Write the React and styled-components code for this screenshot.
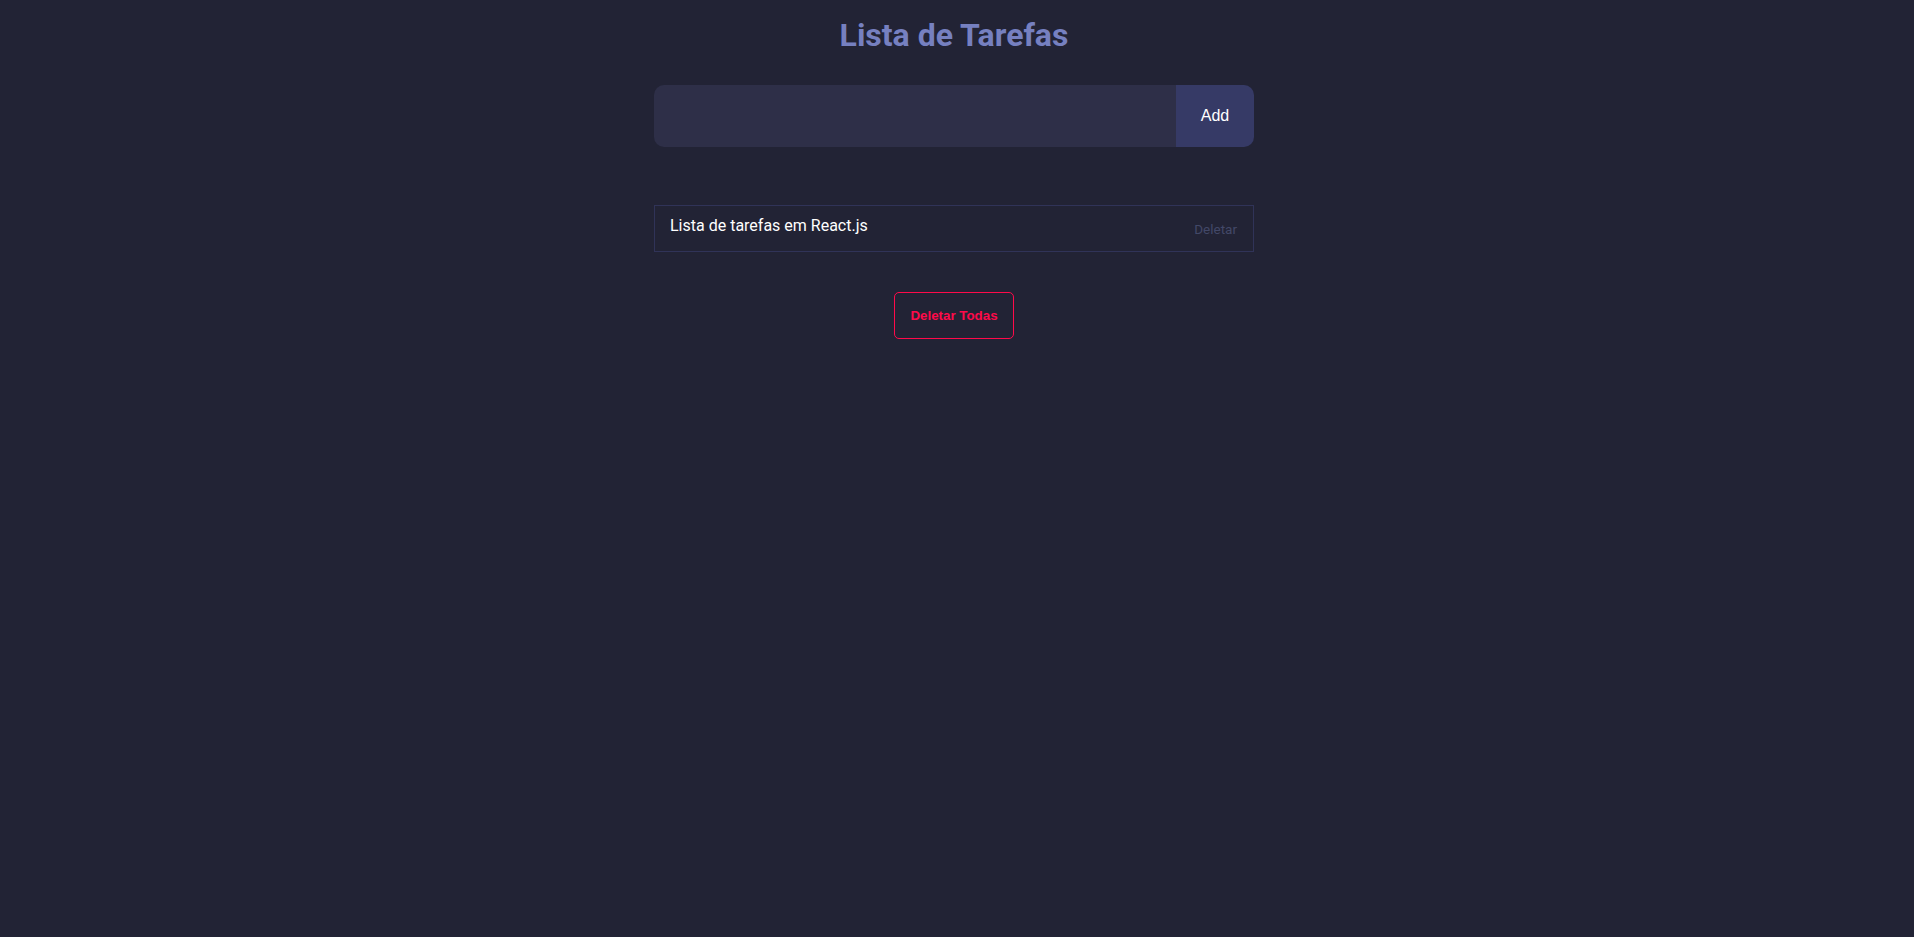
import React, { useState } from "react"
import styled, { createGlobalStyle } from "styled-components"

const GlobalStyle = createGlobalStyle`
  body {
    margin: 0;
    background: #222335;
    font-family: Roboto, "Liberation Sans", Arial, sans-serif;
  }
`

const Page = styled.div`
  min-height: 100vh;
  box-sizing: border-box;
  display: flex;
  flex-direction: column;
  align-items: center;
  padding: 16px 6px 0 0;
`

const Title = styled.h1`
  margin: 0 0 31px;
  font-size: 32px;
  font-weight: 700;
  color: #7680c0;
`

const Form = styled.form`
  display: flex;
  width: 600px;
  height: 62px;
  border-radius: 10px;
  overflow: hidden;
`

const Input = styled.input`
  flex: 1;
  min-width: 0;
  border: none;
  outline: none;
  padding: 0 16px;
  background: #2e2f48;
  color: #fff;
  font-family: Roboto, sans-serif;
  font-size: 16px;
`

const AddButton = styled.button`
  width: 78px;
  border: none;
  background: #363a66;
  color: #fff;
  font-family: "Liberation Sans", Arial, sans-serif;
  font-size: 16px;
  cursor: pointer;
`

const List = styled.ul`
  list-style: none;
  margin: 58px 0 0;
  padding: 0;
  width: 600px;
`

const Item = styled.li`
  box-sizing: border-box;
  height: 47px;
  display: flex;
  justify-content: space-between;
  align-items: flex-start;
  padding: 0 16px 0 15px;
  border: 1px solid #303358;
`

const ItemText = styled.span`
  padding-top: 10px;
  color: #fff;
  font-size: 16px;
`

const DeleteButton = styled.button`
  align-self: center;
  padding: 0;
  border: none;
  background: transparent;
  color: #424868;
  font-family: Roboto, sans-serif;
  font-size: 13.5px;
  cursor: pointer;
`

const ClearButton = styled.button`
  margin-top: 40px;
  padding: 15px;
  border: 1px solid #ff0a4a;
  border-radius: 5px;
  background: transparent;
  color: #ff0a4a;
  font-family: "Liberation Sans", Arial, sans-serif;
  font-size: 13.33px;
  font-weight: 700;
  cursor: pointer;
`

export default function App() {
  const [tasks, setTasks] = useState(["Lista de tarefas em React.js"])
  const [text, setText] = useState("")

  const add = (e) => {
    e.preventDefault()
    if (!text.trim()) return
    setTasks([...tasks, text])
    setText("")
  }

  return (
    <Page>
      <GlobalStyle />
      <Title>Lista de Tarefas</Title>
      <Form onSubmit={add}>
        <Input value={text} onChange={(e) => setText(e.target.value)} />
        <AddButton type="submit">Add</AddButton>
      </Form>
      <List>
        {tasks.map((t, i) => (
          <Item key={i}>
            <ItemText>{t}</ItemText>
            <DeleteButton onClick={() => setTasks(tasks.filter((_, j) => j !== i))}>
              Deletar
            </DeleteButton>
          </Item>
        ))}
      </List>
      <ClearButton onClick={() => setTasks([])}>Deletar Todas</ClearButton>
    </Page>
  )
}
